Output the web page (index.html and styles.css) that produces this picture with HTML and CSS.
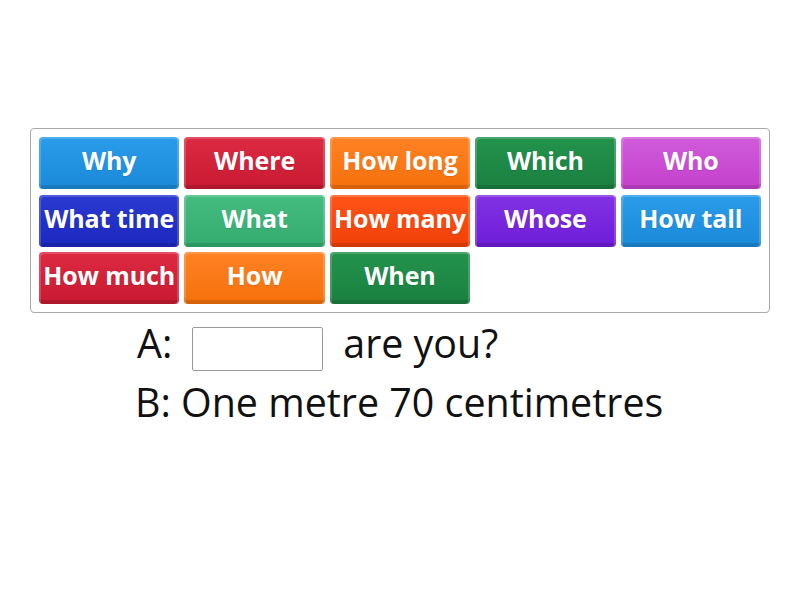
FILE: index.html
```html
<!DOCTYPE html>
<html>
<head>
<meta charset="utf-8">
<link rel="stylesheet" href="styles.css">
</head>
<body>
<div class="bank">
  <div class="tile blue">Why</div>
  <div class="tile red">Where</div>
  <div class="tile orange">How long</div>
  <div class="tile green">Which</div>
  <div class="tile pink">Who</div>
  <div class="tile navy">What time</div>
  <div class="tile mint">What</div>
  <div class="tile flame">How many</div>
  <div class="tile purple">Whose</div>
  <div class="tile blue">How tall</div>
  <div class="tile red">How much</div>
  <div class="tile orange">How</div>
  <div class="tile green">When</div>
</div>
<div class="text">
  <div class="line line-a"><span>A:</span><span class="blank"></span><span>are you?</span></div>
  <div class="line line-b">B: One metre 70 centimetres</div>
</div>
</body>
</html>
```
FILE: styles.css
```css
html, body {
  margin: 0;
  padding: 0;
  background: #fff;
  font-family: "Open Sans", "Liberation Sans", sans-serif;
}
body {
  width: 800px;
  height: 600px;
  overflow: hidden;
}
.bank {
  margin: 128px 0 0 30px;
  width: 722px;
  height: 167px;
  padding: 8px;
  border: 1px solid #a9a9a9;
  border-radius: 4px;
  display: grid;
  grid-template-columns: repeat(5, 1fr);
  grid-auto-rows: 52px;
  column-gap: 5px;
  row-gap: 5.5px;
}
.tile {
  box-sizing: border-box;
  border-radius: 4px;
  color: #fff;
  font-weight: 700;
  font-size: 25px;
  letter-spacing: -0.1px;
  display: flex;
  align-items: center;
  justify-content: center;
  padding-bottom: 6px;
  white-space: nowrap;
  box-shadow: inset 2px 2px 0 rgba(255,255,255,0.18), inset -2px 0 0 rgba(255,255,255,0.18), inset 0 -4px 0 rgba(0,0,0,0.12);
  text-shadow: 0 1px 1px rgba(0,0,0,0.1);
}
.blue   { background: linear-gradient(#2a9cea, #1a8ad8); }
.red    { background: linear-gradient(#dc2a42, #c81a32); }
.orange { background: linear-gradient(#ff8224, #f5700c); }
.green  { background: linear-gradient(#23934c, #1a8040); }
.pink   { background: linear-gradient(#d05cda, #c440cc); }
.navy   { background: linear-gradient(#2a3ad0, #1c28c0); }
.mint   { background: linear-gradient(#44bc80, #34ac70); }
.flame  { background: linear-gradient(#ff5418, #f04008); }
.purple { background: linear-gradient(#8232e4, #6e1cd8); }

.text {
  margin-top: 1px;
  font-size: 39.4px;
  color: #111;
}
.line {
  height: 59px;
  line-height: 59px;
  display: flex;
  align-items: flex-start;
  white-space: nowrap;
}
.line-a { padding-left: 137px; }
.line-b { padding-left: 135px; }
.blank {
  box-sizing: border-box;
  width: 131px;
  height: 44px;
  margin: 13px 20px 0 20px;
  border: 1px solid #999;
  border-radius: 2px;
}
```
